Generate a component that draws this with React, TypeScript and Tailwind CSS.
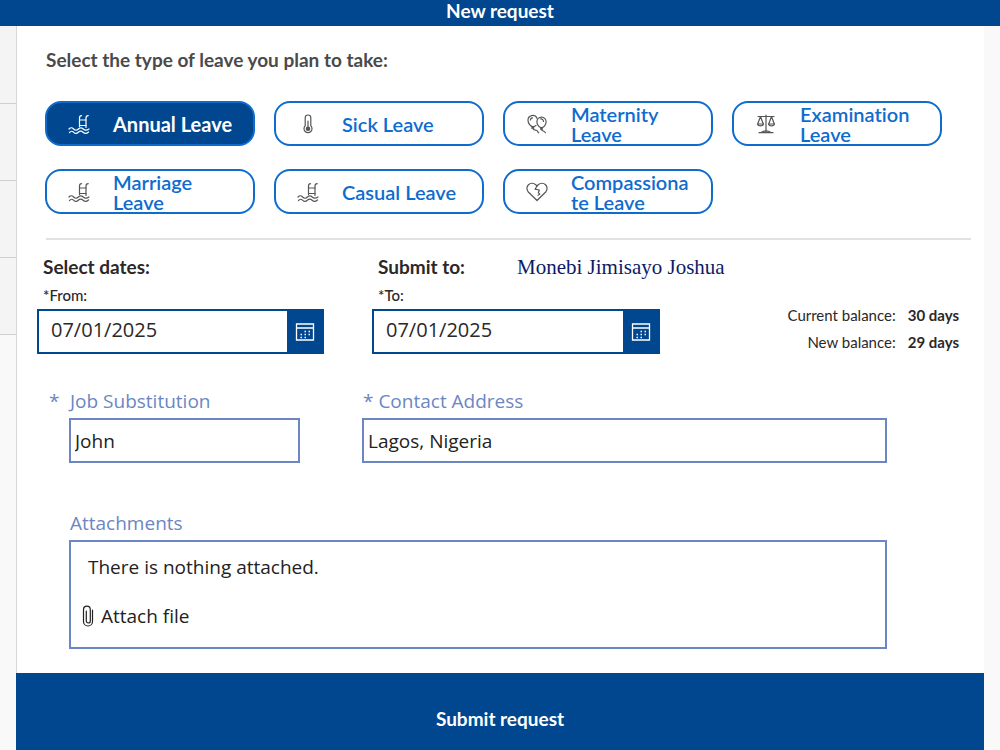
import { useState } from "react";
import type { ReactNode } from "react";

function IconBase({ children }: { children: ReactNode }) {
  return (
    <svg
      viewBox="0 0 24 24"
      className="h-6 w-6 shrink-0"
      fill="none"
      stroke="currentColor"
      strokeWidth="1.2"
      strokeLinecap="round"
      strokeLinejoin="round"
      aria-hidden="true"
    >
      {children}
    </svg>
  );
}

function PoolIcon() {
  return (
    <IconBase>
      <path d="M12.500 14.500V6q0-2.300 2-2.300M19 15.500V6q0-2.300 2.200-2.300" />
      <path d="M12.500 8H19M12.500 13.500H19" />
      <path d="M2 17c1.600-1.700 3-1.700 4.600 0s3.200 1.600 4.800 0 3.200-1.600 4.800 0 3.600 1.600 5.800 0" />
      <path d="M2.500 20.500c1.500-1.600 2.800-1.600 4.200-.2s3 1.500 4.600 0 3.200-1.500 4.800 0 3.400 1.500 5.400-.3" />
    </IconBase>
  );
}

function ThermometerIcon() {
  return (
    <IconBase>
      <path d="M9.200 13.800V5.800a2.800 2.800 0 0 1 5.600 0v8a4 4 0 1 1-5.600 0Z" />
      <path d="M12 9v6" />
      <circle cx="12" cy="16.800" r="1.700" fill="currentColor" />
    </IconBase>
  );
}

function BalloonsIcon() {
  return (
    <IconBase>
      <path d="M11 13.300c-1 1-2.400 1.400-3.200 1.400C5.700 14.700 3 11.500 3 8.300a4.700 4.700 0 0 1 9-2" />
      <path d="M16.500 15.700c-2.200 0-4.600-3-4.600-6a4.600 4.600 0 0 1 9.200 0c0 3-2.400 6-4.600 6Z" />
      <path d="M5.500 8a2.200 2.200 0 0 1 2-2.200M15.700 6.900a2.600 2.600 0 0 1 2.800 2.600" />
      <path d="M7.800 14.700l-1 1.500h2zM16.500 15.700l-1 1.500h2z" />
      <path d="M8 16.500c0 2.500 3.500 1 4.500 2.500.5.700.3 1.500 1.200 1.800M16.700 17.500c-.2 2 3 1 3.700 3.300" />
    </IconBase>
  );
}

function ScalesIcon() {
  return (
    <IconBase>
      <path d="M4 4.500h16M12 3v17" />
      <path d="M6.500 4.500 3.700 12M6.500 4.500 9.300 12M17.500 4.500 14.700 12M17.500 4.500 20.300 12" />
      <path d="M3.500 12h6c-.4 2.400-5.600 2.400-6 0ZM14.500 12h6c-.4 2.400-5.600 2.400-6 0Z" />
      <path d="M5 20.700h14M7.500 20.500c.3-1.500 2.500-1.200 4.500-1.700 2 .5 4.200.2 4.500 1.700" />
    </IconBase>
  );
}

function BrokenHeartIcon() {
  return (
    <IconBase>
      <path d="M12 20.500 3.300 12A5.200 5.200 0 0 1 10.700 4.700L12 6l1.300-1.300A5.200 5.200 0 0 1 20.700 12Z" />
      <path d="m12 6-2 3.200 4.300.8-1 2.700 1.500 1.500-1.800 1" />
    </IconBase>
  );
}

function CalendarIcon() {
  return (
    <svg viewBox="0 0 20 18" className="h-[18px] w-5" fill="none" aria-hidden="true">
      <path d="M1.500 1h17v16h-17zM1.500 5h17" stroke="currentColor" strokeWidth="1.300" />
      <path
        d="M9.500 8.500H11M13.500 8.500H15M5.500 11.500H7M9.500 11.500H11M13.500 11.500H15M5.500 14.500H7M9.500 14.500H11"
        stroke="currentColor"
        strokeWidth="1.500"
      />
    </svg>
  );
}

function PaperclipIcon() {
  return (
    <svg
      viewBox="0 0 12 22"
      className="h-[22px] w-3"
      fill="none"
      stroke="currentColor"
      strokeWidth="1.200"
      strokeLinecap="round"
      aria-hidden="true"
    >
      <path d="M10.500 5v11.500a4.500 4.500 0 0 1-9 0V4.500a3.400 3.400 0 0 1 6.800 0v11.500a2 2 0 0 1-4 0V6" />
    </svg>
  );
}

const leaveTypes = [
  { name: "Annual Leave", icon: <PoolIcon /> },
  { name: "Sick Leave", icon: <ThermometerIcon /> },
  { name: "Maternity Leave", icon: <BalloonsIcon /> },
  { name: "Examination Leave", icon: <ScalesIcon /> },
  { name: "Marriage Leave", icon: <PoolIcon /> },
  { name: "Casual Leave", icon: <PoolIcon /> },
  { name: "Compassionate Leave", icon: <BrokenHeartIcon /> },
];

function DateField({ id, label }: { id: string; label: string }) {
  return (
    <div className="mt-1 min-w-0">
      <label htmlFor={id} className="block pl-1.5 text-[15px] leading-5 font-medium">
        *{label}
      </label>
      <div className="mt-1 flex h-[45px] border-2 border-[#00478f]">
        <input
          id={id}
          type="text"
          defaultValue="07/01/2025"
          className="min-w-0 flex-1 bg-white px-3 pb-1 font-['Open_Sans',sans-serif] text-[20px] outline-none"
        />
        <button
          type="button"
          aria-label={`Choose date, ${label}`}
          className="flex w-[35px] items-center justify-center bg-[#00478f] text-white"
        >
          <CalendarIcon />
        </button>
      </div>
    </div>
  );
}

function TextField({ id, value }: { id: string; value: string }) {
  return (
    <input
      id={id}
      type="text"
      defaultValue={value}
      className="mt-1 block h-[45px] w-full border-2 border-[#6c86c3] bg-white px-1 text-[19px] text-[#222] outline-none"
    />
  );
}

export default function App() {
  const [selected, setSelected] = useState("Annual Leave");

  return (
    <div className="flex min-h-screen flex-col bg-[#f9f9f9] font-[Lato,sans-serif] text-[#2b2829] [font-variant-ligatures:none]">
      <header className="h-[26px] bg-[#00478f] text-center text-white">
        <h1 className="text-[19px] leading-[22px] font-bold">New request</h1>
      </header>

      <div className="flex flex-1">
        {/* Edge of the list behind the panel */}
        <div className="w-4 shrink-0">
          <div className="h-[78px] border-b border-[#cfcfcf] bg-[#f4f4f4]" />
          <div className="h-[77px] border-b border-[#cfcfcf] bg-[#f4f4f4]" />
          <div className="h-[77px] border-b border-[#cfcfcf] bg-[#f4f4f4]" />
          <div className="h-[77px] border-b border-[#cfcfcf] bg-[#f4f4f4]" />
        </div>

        <form
          className="mr-4 flex min-w-0 flex-1 flex-col bg-white"
          onSubmit={(e) => e.preventDefault()}
        >
          <div className="border-l border-[#d8d8d8] pb-6">
            <section className="pt-5 pr-[42px] pl-7">
              <h2 className="pl-px text-[19px] leading-7 font-bold text-[#4a4a4a]">
                Select the type of leave you plan to take:
              </h2>
              <div className="mt-[27px] grid grid-cols-4 gap-x-[19px] gap-y-[23px]">
                {leaveTypes.map((type) => (
                  <button
                    key={type.name}
                    type="button"
                    aria-pressed={selected === type.name}
                    onClick={() => setSelected(type.name)}
                    className={`flex h-[45px] items-center gap-[22px] rounded-2xl border-2 border-[#0f6ccf] pr-4 pl-5 text-left ${
                      selected === type.name
                        ? "bg-[#00478f] font-bold text-white"
                        : "bg-white font-semibold text-[#555]"
                    }`}
                  >
                    {type.icon}
                    <span
                      className={`min-w-0 flex-1 text-[20px] leading-5 wrap-anywhere ${
                        selected === type.name ? "text-white" : "text-[#0f6ccf]"
                      }`}
                    >
                      {type.name}
                    </span>
                  </button>
                ))}
              </div>
            </section>

            <hr className="mt-6 mr-[13px] ml-[29px] border-t-2 border-[#e1e1e1]" />

            <section className="mt-[13px] grid grid-cols-[287fr_288fr_251fr] gap-x-12 pr-[25px] pl-5">
              <h2 className="pl-1.5 text-[19px] leading-7 font-bold">Select dates:</h2>
              <div className="col-span-2 flex gap-[52px] pl-1.5 leading-7">
                <h2 className="text-[19px] font-bold">Submit to:</h2>
                <p className="font-['Liberation_Serif',serif] text-[21px] text-[#0d1b66]">
                  Monebi Jimisayo Joshua
                </p>
              </div>
              <DateField id="from" label="From:" />
              <DateField id="to" label="To:" />
              <dl className="mt-[21px] grid grid-cols-[1fr_auto] gap-x-3 self-start text-right text-[15px] leading-[27px]">
                <dt>Current balance:</dt>
                <dd className="font-bold">30 days</dd>
                <dt>New balance:</dt>
                <dd className="font-bold">29 days</dd>
              </dl>
            </section>

            <section className="mt-8 grid grid-cols-[251fr_525fr] gap-x-[62px] pr-[97px] pl-8 font-['Open_Sans',sans-serif] text-[19px] leading-[26px]">
              <div className="min-w-0">
                <label htmlFor="job" className="flex text-[#6c86c3]">
                  <span className="w-[21px]">*</span>Job Substitution
                </label>
                <div className="pl-5">
                  <TextField id="job" value="John" />
                </div>
              </div>
              <div className="min-w-0">
                <label htmlFor="address" className="block pl-px text-[#6c86c3]">
                  * Contact Address
                </label>
                <TextField id="address" value="Lagos, Nigeria" />
              </div>
            </section>

            <section className="mt-[47px] pr-[97px] pl-[52px] font-['Open_Sans',sans-serif] text-[19px] leading-[26px] text-[#222]">
              <h2 className="pl-px text-[#6c86c3]">Attachments</h2>
              <div className="mt-1 border-2 border-[#6c86c3] pt-3 pb-[18px] pl-[11px]">
                <p className="pl-1.5">There is nothing attached.</p>
                <button type="button" className="mt-[23px] flex items-center gap-[7px]">
                  <PaperclipIcon />
                  Attach file
                </button>
              </div>
            </section>
          </div>

          <button
            type="submit"
            className="flex-1 bg-[#00478f] pt-3.5 text-[19px] leading-7 font-bold text-white"
          >
            Submit request
          </button>
        </form>
      </div>
    </div>
  );
}
